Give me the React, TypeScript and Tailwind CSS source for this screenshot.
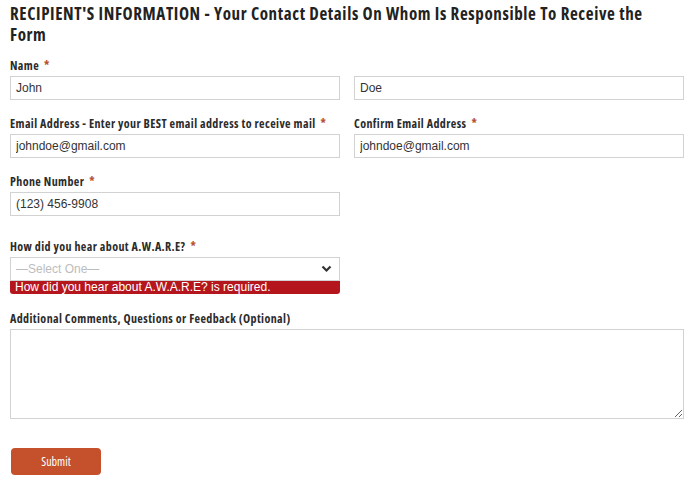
import { useState } from 'react';

const labelCls =
  "block h-4 mb-[2px] text-[12px] leading-4 font-bold tracking-[0.4px] text-[#2b2b2b] [font-family:'Open_Sans',sans-serif] [font-stretch:75%]";
const inputCls =
  "block w-full h-6 px-[5px] border border-[#d2d2d2] bg-white text-[12px] text-[#333] [font-family:'Liberation_Sans',Arial,sans-serif] focus:outline-none";

function Req() {
  return <span className="ml-[5px] text-[#b8502f]">*</span>;
}

export default function App() {
  const [form, setForm] = useState({
    first: 'John',
    last: 'Doe',
    email: 'johndoe@gmail.com',
    confirm: 'johndoe@gmail.com',
    phone: '(123) 456-9908',
    source: '',
    comments: '',
  });

  const handleChange = (e: React.ChangeEvent<HTMLInputElement | HTMLTextAreaElement | HTMLSelectElement>) => {
    const { name, value } = e.target;
    setForm(prev => ({ ...prev, [name]: value }));
  };

  return (
    <div className="min-h-screen bg-white pl-[10px] pr-4 pt-[3px]">
      <h2 className="max-w-[652px] text-[17px] leading-[21px] font-bold tracking-[0.62px] text-[#222] [font-family:'Open_Sans',sans-serif] [font-stretch:75%]">
        RECIPIENT'S INFORMATION - Your Contact Details On Whom Is Responsible To Receive the Form
      </h2>

      <form className="mt-[13px]" onSubmit={e => e.preventDefault()}>
        <div className="grid grid-cols-2 gap-x-[14px] gap-y-4">
          <div>
            <label className={labelCls}>
              Name<Req />
            </label>
            <input name="first" value={form.first} onChange={handleChange} className={inputCls} />
          </div>
          <div>
            <div className="h-4 mb-[2px]" />
            <input name="last" value={form.last} onChange={handleChange} className={inputCls} />
          </div>

          <div>
            <label className={labelCls}>
              Email Address - Enter your BEST email address to receive mail<Req />
            </label>
            <input name="email" value={form.email} onChange={handleChange} className={inputCls} />
          </div>
          <div>
            <label className={labelCls}>
              Confirm Email Address<Req />
            </label>
            <input name="confirm" value={form.confirm} onChange={handleChange} className={inputCls} />
          </div>

          <div>
            <label className={labelCls}>
              Phone Number<Req />
            </label>
            <input name="phone" value={form.phone} onChange={handleChange} className={inputCls} />
          </div>
        </div>

        <div className="mt-[23px] w-[330px]">
          <label className={labelCls}>
            How did you hear about A.W.A.R.E?<Req />
          </label>
          <div className="relative">
            <select
              name="source"
              value={form.source}
              onChange={handleChange}
              className={`${inputCls} appearance-none pr-6 text-[#bdbdbd]`}
            >
              <option value="">—Select One—</option>
              <option value="web">Web Search</option>
              <option value="friend">Friend</option>
            </select>
            <svg
              className="pointer-events-none absolute right-[8px] top-[8px]"
              width="11"
              height="8"
              viewBox="0 0 11 8"
              fill="none"
            >
              <path d="M1.5 1.5L5.5 5.5L9.5 1.5" stroke="#333" strokeWidth="2.2" />
            </svg>
          </div>
          <div className="h-[13px] rounded-b-[3px] bg-[#b5161d] px-[5px] text-[12px] leading-[13px] text-white [font-family:'Liberation_Sans',Arial,sans-serif]">
            How did you hear about A.W.A.R.E? is required.
          </div>
        </div>

        <div className="mt-[17px]">
          <label className={labelCls}>Additional Comments, Questions or Feedback (Optional)</label>
          <textarea
            name="comments"
            value={form.comments}
            onChange={handleChange}
            className="block w-full h-[90px] border border-[#d2d2d2] p-[5px] text-[12px] text-[#333] [font-family:'Liberation_Sans',Arial,sans-serif] focus:outline-none"
          />
        </div>

        <button
          type="submit"
          className="mt-[29px] ml-px h-[27px] w-[90px] rounded-[4px] bg-[#c4512b] text-[12px] text-white [font-family:'Open_Sans',sans-serif] [font-stretch:75%]"
        >
          Submit
        </button>
      </form>
    </div>
  );
}
